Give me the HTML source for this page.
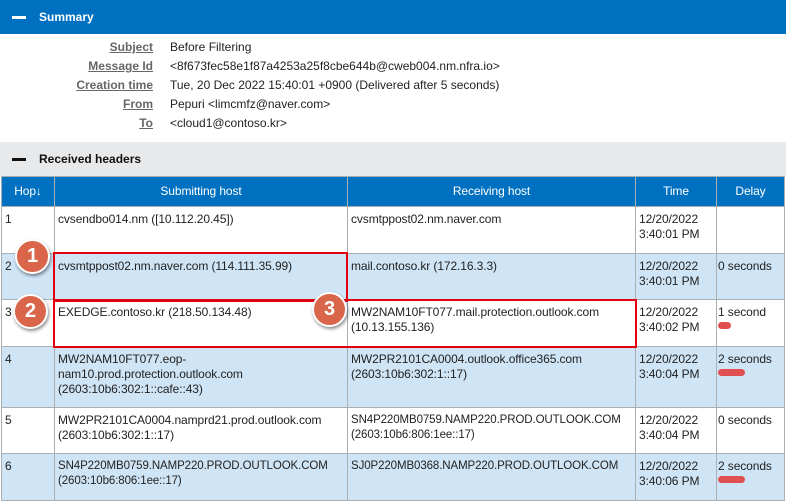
<!DOCTYPE html>
<html><head><style>
*{margin:0;padding:0;box-sizing:border-box}
body{width:786px;height:502px;overflow:hidden;background:#fff;font-family:"Liberation Sans",sans-serif;font-size:12px;color:#222;position:relative}
.bar{position:absolute;left:0;width:786px;height:34px}
.bar .dash{position:absolute;left:12px;top:16px;width:14px;height:3px}
.bar b{position:absolute;left:39px;top:10px;font-size:12px}
.lbl{position:absolute;right:633px;text-align:right;color:#666;text-decoration:underline;font-weight:bold}
.val{position:absolute;left:170px}
table{position:absolute;left:1px;top:176px;border-collapse:collapse;width:783px;table-layout:fixed}
td,th{border:1px solid #a8b0b4;vertical-align:top;padding:5px 3px;font-weight:normal;line-height:15px;letter-spacing:-0.1px;white-space:nowrap;overflow:visible}
th{background:#0070c0;color:#fff;height:30px;text-align:center;vertical-align:middle;padding:0}
tr.b td{background:#cfe4f5}
.rb{position:absolute;border:2px solid #e00010}
.c{position:absolute;width:35px;height:35px;border-radius:50%;background:#d9654a;border:2px solid #fff;box-shadow:1px 2px 3px rgba(0,0,0,.45);color:#fff;font-weight:bold;font-size:20px;text-align:center;line-height:31px}
.pill{display:block;height:7px;background:#e05050;border-radius:4px;margin-top:2px}
</style></head><body>
<div class="bar" style="top:0;background:#0070c0;color:#fff"><div class="dash" style="background:#fff"></div><b>Summary</b></div>
<div class="lbl" style="top:40px">Subject</div><div class="val" style="top:40px">Before Filtering</div>
<div class="lbl" style="top:59px">Message Id</div><div class="val" style="top:59px">&lt;8f673fec58e1f87a4253a25f8cbe644b@cweb004.nm.nfra.io&gt;</div>
<div class="lbl" style="top:78px">Creation time</div><div class="val" style="top:78px">Tue, 20 Dec 2022 15:40:01 +0900 (Delivered after 5 seconds)</div>
<div class="lbl" style="top:97px">From</div><div class="val" style="top:97px">Pepuri &lt;limcmfz@naver.com&gt;</div>
<div class="lbl" style="top:116px">To</div><div class="val" style="top:116px">&lt;cloud1@contoso.kr&gt;</div>
<div class="bar" style="top:142px;background:#e8e9ea;color:#111"><div class="dash" style="background:#111"></div><b>Received headers</b></div>
<table>
<colgroup><col style="width:53px"><col style="width:293px"><col style="width:288px"><col style="width:81px"><col style="width:68px"></colgroup>
<tr><th>Hop↓</th><th>Submitting host</th><th>Receiving host</th><th>Time</th><th>Delay</th></tr>
<tr style="height:47px"><td>1</td><td>cvsendbo014.nm ([10.112.20.45])</td><td>cvsmtppost02.nm.naver.com</td><td>12/20/2022<br>3:40:01 PM</td><td></td></tr>
<tr class="b" style="height:46px"><td>2</td><td>cvsmtppost02.nm.naver.com (114.111.35.99)</td><td>mail.contoso.kr (172.16.3.3)</td><td>12/20/2022<br>3:40:01 PM</td><td style="padding-left:1px">0 seconds</td></tr>
<tr style="height:47px"><td>3</td><td>EXEDGE.contoso.kr (218.50.134.48)</td><td>MW2NAM10FT077.mail.protection.outlook.com<br>(10.13.155.136)</td><td>12/20/2022<br>3:40:02 PM</td><td style="padding-left:1px">1 second<span class="pill" style="width:13px"></span></td></tr>
<tr class="b" style="height:61px"><td>4</td><td>MW2NAM10FT077.eop-<br>nam10.prod.protection.outlook.com<br>(2603:10b6:302:1::cafe::43)</td><td>MW2PR2101CA0004.outlook.office365.com<br>(2603:10b6:302:1::17)</td><td>12/20/2022<br>3:40:04 PM</td><td style="padding-left:1px">2 seconds<span class="pill" style="width:27px"></span></td></tr>
<tr style="height:46px"><td>5</td><td>MW2PR2101CA0004.namprd21.prod.outlook.com<br>(2603:10b6:302:1::17)</td><td style="font-size:11.5px">SN4P220MB0759.NAMP220.PROD.OUTLOOK.COM<br>(2603:10b6:806:1ee::17)</td><td>12/20/2022<br>3:40:04 PM</td><td style="padding-left:1px">0 seconds</td></tr>
<tr class="b" style="height:47px"><td>6</td><td style="font-size:11.5px">SN4P220MB0759.NAMP220.PROD.OUTLOOK.COM<br>(2603:10b6:806:1ee::17)</td><td style="font-size:11.5px">SJ0P220MB0368.NAMP220.PROD.OUTLOOK.COM</td><td>12/20/2022<br>3:40:06 PM</td><td style="padding-left:1px">2 seconds<span class="pill" style="width:27px"></span></td></tr>
</table>
<div class="rb" style="left:53px;top:252px;width:295px;height:50px"></div>
<div class="rb" style="left:53px;top:299px;width:584px;height:49px"></div>
<div class="c" style="left:15px;top:239px">1</div>
<div class="c" style="left:13px;top:294px">2</div>
<div class="c" style="left:312px;top:292px">3</div>
</body></html>
